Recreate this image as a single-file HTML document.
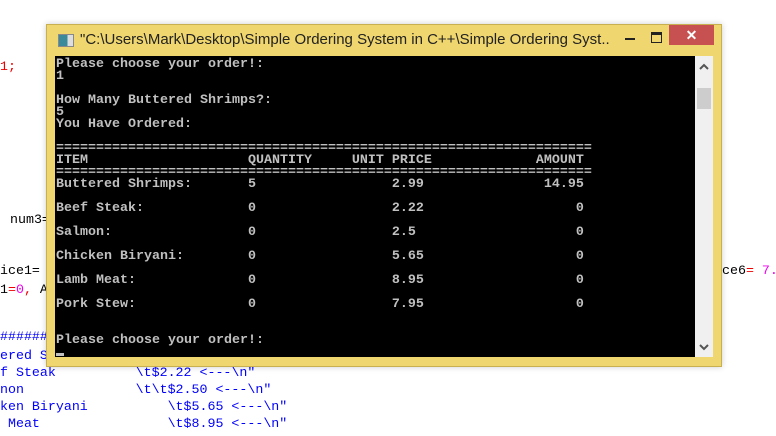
<!DOCTYPE html>
<html><head><style>
body{margin:0;width:776px;height:436px;background:#fff;position:relative;overflow:hidden;font-family:"Liberation Mono",monospace}
.bg{position:absolute;font-size:13.3px;white-space:pre;line-height:17px}
.win{position:absolute;left:46px;top:24px;width:676px;height:343px;background:#efd66e;border:1px solid #c8b050;box-sizing:border-box;box-shadow:0 0 6px rgba(0,0,0,.2)}
.title{position:absolute;left:80px;top:31px;width:530px;overflow:hidden;font-family:"Liberation Sans",sans-serif;font-size:15px;color:#222;white-space:nowrap}
.con{position:absolute;left:55px;top:56px;width:640px;height:301px;background:#000}
.txt{position:absolute;left:56px;top:59px;font-family:"Liberation Mono",monospace;font-weight:bold;font-size:13.33px;line-height:12px;color:#c0c0c0;white-space:pre;letter-spacing:0}
.sb{position:absolute;left:695px;top:56px;width:18px;height:301px;background:#f0f0f0}
</style></head><body>
<div class="bg" style="left:0;top:58px;color:#e00">1;</div>
<div class="bg" style="left:10px;top:211px;color:#000">num3=</div>
<div class="bg" style="left:0;top:262px;color:#000">ice1=</div>
<div class="bg" style="left:0;top:281px;color:#000"><span>1</span><span style="color:#e00">=</span><span style="color:#e0e">0</span><span style="color:#e00">,</span> A</div>
<div class="bg" style="left:0;top:328px;color:#00f">######</div>
<div class="bg" style="left:0;top:347px;color:#00f">ered S</div>
<div class="bg" style="left:0;top:364px;color:#00f">f Steak          \t$2.22 &lt;---\n"
non              \t\t$2.50 &lt;---\n"
ken Biryani          \t$5.65 &lt;---\n"
 Meat                \t$8.95 &lt;---\n"</div>
<div class="bg" style="left:722px;top:262px;color:#000">ce6<span style="color:#e00">=</span> <span style="color:#e0e">7.</span></div>
<div class="win"></div>
<div style="position:absolute;left:58px;top:34px;width:14px;height:11px;border:1px solid #888;background:linear-gradient(90deg,#3a8a9a 60%,#ddd 60%)"></div>
<div class="title">"C:\Users\Mark\Desktop\Simple Ordering System in C++\Simple Ordering Syst...</div>
<div style="position:absolute;left:625px;top:38px;width:10px;height:2px;background:#222"></div>
<div style="position:absolute;left:651px;top:32px;width:9px;height:7px;border:1.5px solid #222;border-top-width:3px"></div>
<div style="position:absolute;left:669px;top:25px;width:45px;height:20px;background:#c75050;color:#fff;text-align:center;font:bold 14px/20px 'Liberation Sans',sans-serif">✕</div>
<div class="con"></div>
<div class="sb"><div style="position:absolute;left:2px;top:32px;width:14px;height:21px;background:#cdcdcd"></div>
<svg style="position:absolute;left:4px;top:7px" width="10" height="8"><path d="M1 6 L5 2 L9 6" stroke="#555" stroke-width="2" fill="none"/></svg>
<svg style="position:absolute;left:4px;top:287px" width="10" height="8"><path d="M1 2 L5 6 L9 2" stroke="#555" stroke-width="2" fill="none"/></svg></div>
<div class="txt">Please choose your order!:
1

How Many Buttered Shrimps?:
5
You Have Ordered:

===================================================================
ITEM                    QUANTITY     UNIT PRICE             AMOUNT
===================================================================
Buttered Shrimps:       5                 2.99               14.95

Beef Steak:             0                 2.22                   0

Salmon:                 0                 2.5                    0

Chicken Biryani:        0                 5.65                   0

Lamb Meat:              0                 8.95                   0

Pork Stew:              0                 7.95                   0


Please choose your order!:
</div>
<div style="position:absolute;left:56px;top:353px;width:8px;height:3px;background:#c0c0c0"></div>
</body></html>
